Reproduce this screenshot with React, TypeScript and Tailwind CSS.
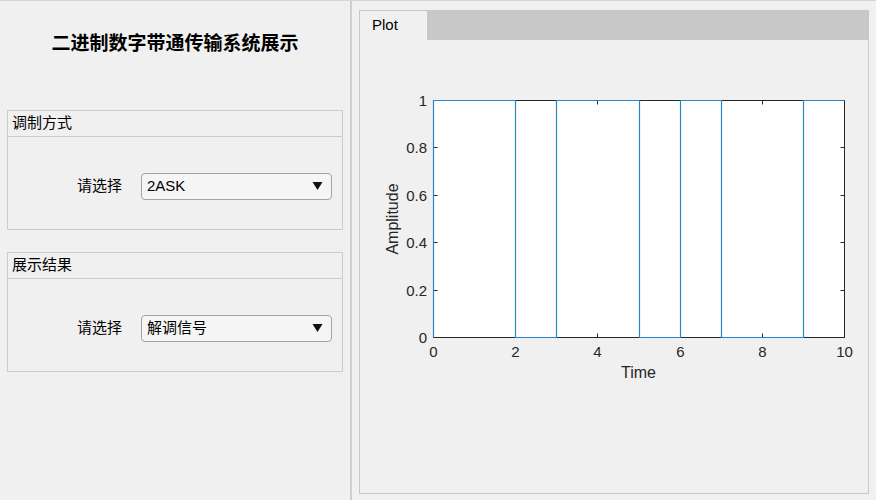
import React from "react";

const AX = { left: 73, top: 60, right: 484, bottom: 297 };
const px = (t: number) => Math.round(AX.left + t * 41.1) + 0.5;
const py = (v: number) => Math.round(AX.bottom - v * 237) + 0.5;

// stairs: start at 0, toggle at the edges
const edges: [number, number][] = [
  [0, 0], [0, 1], [2, 1], [2, 0], [3, 0], [3, 1], [5, 1], [5, 0],
  [6, 0], [6, 1], [7, 1], [7, 0], [9, 0], [9, 1], [10, 1],
];

function Caret() {
  return (
    <svg width="11" height="10" viewBox="0 0 11 10">
      <polygon points="0.5,1 10.5,1 5.5,9" fill="#111" />
    </svg>
  );
}

function Select({ value }: { value: string }) {
  return (
    <div className="ml-[19px] flex h-[27px] w-[191px] items-center justify-between rounded-[4px] border border-[#a3a3a3] bg-[#f5f5f5] pl-[5px] pr-[8px] text-[15px] text-black">
      <span>{value}</span>
      <Caret />
    </div>
  );
}

function Panel({ title, value, className }: { title: string; value: string; className?: string }) {
  return (
    <div className={"mx-[7px] w-[336px] border border-[#cccccc] " + (className ?? "")}>
      <div className="flex h-[26px] items-center border-b border-[#cccccc] pl-[4px] text-[15px] text-black">
        {title}
      </div>
      <div className="flex h-[92px] items-center pt-[6px]">
        <div className="w-[114px] text-right text-[15px] text-black">请选择</div>
        <Select value={value} />
      </div>
    </div>
  );
}

function Chart() {
  const xt = [0, 2, 4, 6, 8, 10];
  const yt = [0, 0.2, 0.4, 0.6, 0.8, 1];
  const pts = edges.map(([t, v]) => `${px(t)},${py(v)}`).join(" ");
  const L = px(0), R = px(10), T = py(1), B = py(0);
  return (
    <svg width="508" height="452" className="block">
      <rect x={L} y={T} width={R - L} height={B - T} fill="#ffffff" stroke="#262626" strokeWidth="1" />
      {xt.map((t) => (
        <g key={"x" + t}>
          <line x1={px(t)} x2={px(t)} y1={B} y2={B - 4} stroke="#262626" />
          <line x1={px(t)} x2={px(t)} y1={T} y2={T + 4} stroke="#262626" />
          <text x={px(t)} y={317} textAnchor="middle" fontSize="15" fill="#262626" fontFamily="Liberation Sans, sans-serif">
            {t}
          </text>
        </g>
      ))}
      {yt.map((v) => (
        <g key={"y" + v}>
          <line x1={L} x2={L + 4} y1={py(v)} y2={py(v)} stroke="#262626" />
          <line x1={R} x2={R - 4} y1={py(v)} y2={py(v)} stroke="#262626" />
          <text x={67} y={py(v) + 5.5} textAnchor="end" fontSize="15" fill="#262626" fontFamily="Liberation Sans, sans-serif">
            {v}
          </text>
        </g>
      ))}
      <polyline points={pts} fill="none" stroke="#2a86cc" strokeWidth="1.2" />
      <text
        x={38}
        y={179}
        transform="rotate(-90 38 179)"
        textAnchor="middle"
        fontSize="16"
        fill="#262626"
        fontFamily="Liberation Sans, sans-serif"
      >
        Amplitude
      </text>
      <text x={278.5} y={338} textAnchor="middle" fontSize="16" fill="#262626" fontFamily="Liberation Sans, sans-serif">
        Time
      </text>
    </svg>
  );
}

export default function App() {
  return (
    <div className="flex h-[500px] w-[876px] overflow-hidden border-t border-[#d6d6d6] bg-[#f0f0f0] font-['Liberation_Sans','Noto_Sans_CJK_SC',sans-serif]">
      {/* left: controls */}
      <div className="flex w-[350px] flex-col">
        <div className="flex h-[87px] items-center justify-center text-[19px] font-bold text-black">
          二进制数字带通传输系统展示
        </div>
        <Panel className="mt-[22px]" title="调制方式" value="2ASK" />
        <Panel className="mt-[22px]" title="展示结果" value="解调信号" />
      </div>

      <div className="w-[2px] bg-[#cfcfcf]" />

      {/* right: tab group */}
      <div className="pl-[7px]">
        <div className="mt-[9px] flex h-[484px] w-[510px] flex-col">
          <div className="flex h-[30px]">
            <div className="w-[68px] border-l border-t border-[#c9c9c9] bg-[#f0f0f0] pl-[12px] pt-[3px] text-[15px] text-black">
              Plot
            </div>
            <div className="flex-1 bg-[#c8c8c8]" />
          </div>
          <div className="flex-1 border-b border-l border-r border-[#c9c9c9]">
            <Chart />
          </div>
        </div>
      </div>
    </div>
  );
}
